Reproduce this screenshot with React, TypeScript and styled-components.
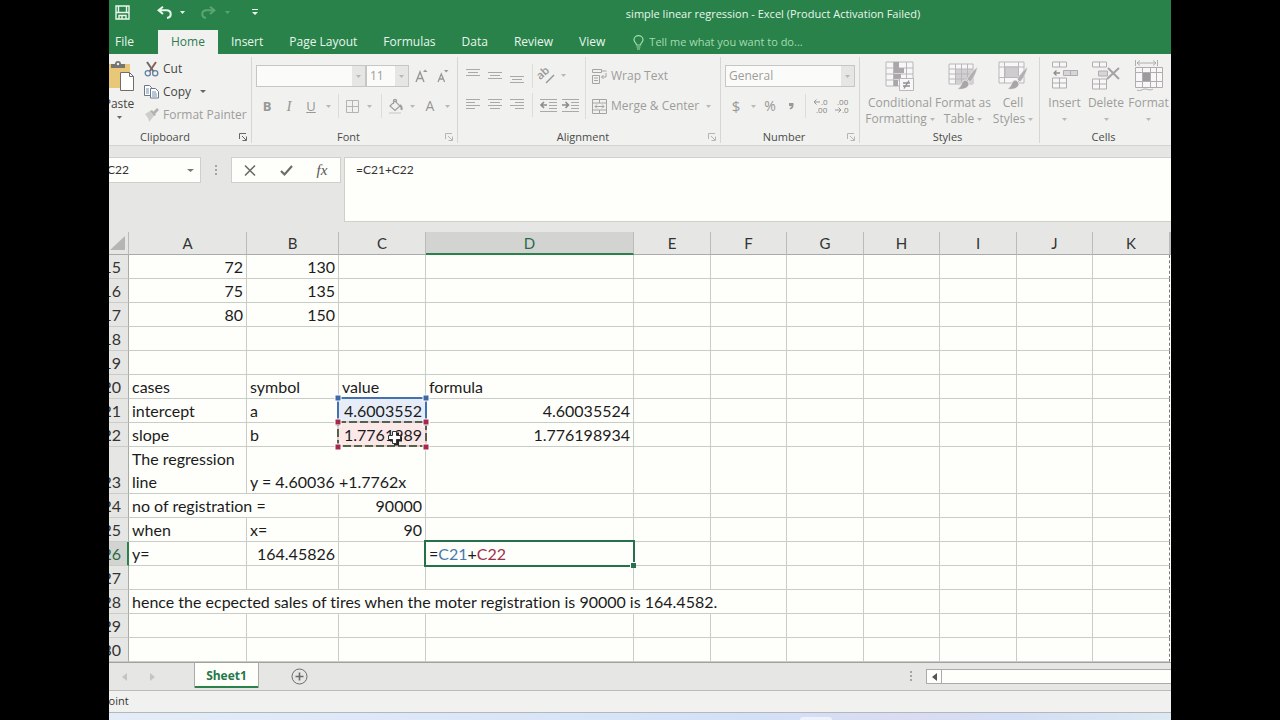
import React from 'react';
import styled, { createGlobalStyle, css } from 'styled-components';

const Global = createGlobalStyle`
  * { box-sizing: border-box; }
  html, body { margin: 0; background: #000; }
  button, input, textarea, select { font: inherit; color: inherit; margin: 0; padding: 0; border: 0; background: none; border-radius: 0; }
  textarea { resize: none; outline: none; }
`;

const UI = `'Open Sans', 'Noto Sans', sans-serif`;
const CELL = `Lato, 'Open Sans', sans-serif`;
const GREEN = '#28824a';
const PAPER = '#fefffb';
const LINE = '#c9cdc8';

const Stage = styled.div`
  min-height: 100vh;
  padding: 0 109px;
  background: #000;
  font-family: ${UI};
  font-size: 12px;
  line-height: 16px;
  color: #444;
`;
const Window = styled.div`
  min-height: 100vh;
  display: flex;
  flex-direction: column;
  overflow: hidden;
  background: #e6e7e4;
`;

/* ---------- title bar and tabs ---------- */
const TitleBar = styled.header`
  display: flex;
  height: 30px;
  background: ${GREEN};
  color: #e9f7ec;
`;
const QuickAccess = styled.div`
  display: flex;
  align-items: center;
  width: 266px;
  height: 24px;
  padding-left: 4px;
  flex: none;
`;
const QuickButton = styled.button<{ $w: number; $gap?: number }>`
  display: flex;
  justify-content: center;
  align-items: center;
  width: ${p => p.$w}px;
  height: 24px;
  margin-right: ${p => p.$gap || 0}px;
`;
const Title = styled.div`
  flex: 1;
  padding-top: 6px;
  text-align: center;
  white-space: nowrap;
  font-size: 11px;
`;
const Tabs = styled.nav`
  display: flex;
  height: 24px;
  background: ${GREEN};
  color: #e9f7ec;
  white-space: nowrap;
`;
const Tab = styled.button<{ $active?: boolean; $first?: boolean }>`
  padding: 0 13px;
  ${p => p.$first && css`width: 49px; padding: 0 0 0 6px; text-align: left;`}
  ${p => p.$active && css`background: #f1f2ef; color: #2f7a50;`}
`;
const TellMe = styled.label`
  display: flex;
  align-items: center;
  gap: 5px;
  margin-left: 15px;
  font-size: 11px;
  color: #a5dcb0;
  input { width: 200px; }
  input::placeholder { color: #a5dcb0; opacity: 1; }
`;

/* ---------- ribbon ---------- */
const Ribbon = styled.section`
  display: flex;
  height: 92px;
  background: #f1f2ef;
  border-bottom: 1px solid #d3d4d1;
`;
const Group = styled.div<{ $w: number; $last?: boolean; $shift?: number }>`
  display: flex;
  flex-direction: column;
  width: ${p => p.$w}px;
  flex: ${p => (p.$last ? '1 0 auto' : 'none')};
  margin: 3px 0 2px ${p => -(p.$shift || 0)}px;
  border-right: ${p => (p.$last ? 0 : 1)}px solid #d6d7d4;
  min-width: 0;
`;
const GroupBody = styled.div`
  display: flex;
  flex: 1;
  min-height: 0;
  padding-left: 4px;
`;
const GroupFooter = styled.div`
  display: flex;
  flex: none;
  height: 12px;
  padding-right: 4px;
  align-items: center;
  font-size: 11px;
  line-height: 12px;
  color: #4a4a4a;
  span { flex: 1; text-align: center; }
`;
const Stack = styled.div<{ $w?: number; $line?: boolean; $top?: number; $left?: number }>`
  display: flex;
  flex-direction: column;
  width: ${p => (p.$w ? p.$w + 'px' : 'auto')};
  height: ${p => (p.$line ? 62 : 70)}px;
  padding-top: ${p => p.$top ?? 4}px;
  padding-left: ${p => p.$left ?? 0}px;
  ${p => p.$line && css`border-right: 1px solid #dcdddb;`}
`;
const Row = styled.div`
  display: flex;
  align-items: center;
  height: 30px;
`;
const Tool = styled.button<{ $w?: number; $dim?: boolean }>`
  display: flex;
  flex: none;
  align-items: center;
  justify-content: ${p => (p.$w ? 'center' : 'flex-start')};
  gap: 4px;
  width: ${p => (p.$w ? p.$w + 'px' : 'auto')};
  height: 23px;
  white-space: nowrap;
  color: ${p => (p.$dim ? '#9d9c9b' : '#444')};
  svg { flex: none; overflow: visible; }
`;
const Glyph = styled(Tool)<{ $bold?: boolean; $italic?: boolean; $under?: boolean; $size?: number; $color?: string }>`
  font-size: ${p => p.$size ?? 13}px;
  font-weight: ${p => (p.$bold ? 700 : 400)};
  font-style: ${p => (p.$italic ? 'italic' : 'normal')};
  font-family: ${p => (p.$italic ? `'Liberation Serif', serif` : UI)};
  text-decoration: ${p => (p.$under ? 'underline' : 'none')};
  color: ${p => p.$color || '#989796'};
`;
const Rule = styled.i`
  width: 1px;
  height: 24px;
  margin: 0 4px;
  background: #dcdddb;
`;
const Combo = styled.label<{ $w: number }>`
  display: flex;
  width: ${p => p.$w}px;
  height: 22px;
  border: 1px solid #c6c7c4;
  background: #fbfcf9;
  color: #9d9c9b;
  input { flex: 1; min-width: 0; padding-left: 3px; }
  span { display: flex; align-items: center; justify-content: center; width: 13px; background: #e6e7e4; }
`;
const Big = styled.button<{ $w: number }>`
  display: flex;
  flex-direction: column;
  align-items: center;
  width: ${p => p.$w}px;
  padding-top: 3px;
  color: #9d9c9b;
  white-space: nowrap;
  svg.art { margin-bottom: 4px; flex: none; }
  span { display: flex; align-items: center; gap: 3px; height: 16px; }
`;
const Paste = styled.button`
  display: flex;
  flex-direction: column;
  align-items: center;
  width: 38px;
  margin-left: 5px;
  padding-top: 3px;
  svg.art { margin-bottom: 2px; flex: none; }
  span { height: 16px; margin-bottom: 4px; }
`;

/* ---------- formula bar ---------- */
const FormulaBar = styled.section`
  display: flex;
  align-items: flex-start;
  height: 86px;
  padding-top: 11px;
  font-family: ${CELL};
  color: #333;
`;
const Field = styled.div<{ $w: number; $open?: boolean }>`
  display: flex;
  align-items: center;
  justify-content: flex-end;
  width: ${p => p.$w}px;
  height: 26px;
  background: ${PAPER};
  border: 1px solid #cfd0cd;
  ${p => p.$open && css`border-left: 0;`}
  overflow: hidden;
  flex: none;
`;
const NameInput = styled.input`
  width: 73px;
  flex: none;
`;
const Handle = styled.div`
  width: 30px;
  height: 26px;
  display: flex;
  align-items: center;
  justify-content: center;
  flex: none;
`;
const Formula = styled.textarea`
  flex: 1;
  min-width: 0;
  height: 65px;
  margin-left: 3px;
  padding: 4px 11px;
  background: ${PAPER};
  border: 1px solid #cfd0cd;
  border-right: 0;
`;

/* ---------- sheet ---------- */
const Grid = styled.div`
  flex: 1;
  background: ${PAPER};
  overflow: hidden;
`;
const Table = styled.table`
  width: 100%;
  table-layout: fixed;
  border-collapse: separate;
  border-spacing: 0;
  font-family: ${CELL};
  font-size: 16px;
  font-variant-ligatures: none;
  color: #1b1b1b;
`;
const ColHead = styled.th<{ $on?: boolean }>`
  height: 23px;
  padding: 0;
  line-height: 20px;
  font-size: 15px;
  font-weight: 400;
  background: ${p => (p.$on ? '#d3d4d1' : '#e6e7e4')};
  border-right: 1px solid #b9bcb8;
  border-bottom: ${p => (p.$on ? `2px solid ${GREEN}` : '1px solid #a8aba7')};
  color: ${p => (p.$on ? '#2a6a49' : '#333')};
`;
const Corner = styled(ColHead)`
  svg { display: block; margin-left: 1px; }
`;
const RowHead = styled.th<{ $on?: boolean }>`
  padding: 0;
  font-weight: 400;
  vertical-align: bottom;
  background: ${p => (p.$on ? '#d3d4d1' : '#e6e7e4')};
  border-right: ${p => (p.$on ? `2px solid ${GREEN}` : '1px solid #a8aba7')};
  border-bottom: 1px solid ${LINE};
  color: ${p => (p.$on ? '#2a6a49' : '#333')};
  div { display: flex; justify-content: flex-end; line-height: 23px; padding-right: ${p => (p.$on ? 6 : 7)}px; overflow: hidden; }
`;
const Cell = styled.td<{ $right?: boolean; $dash?: boolean; $fill?: string; $wrap?: boolean }>`
  position: relative;
  height: ${p => (p.$wrap ? 47 : 24)}px;
  padding: 0 3px;
  line-height: 23px;
  vertical-align: bottom;
  text-align: ${p => (p.$right ? 'right' : 'left')};
  white-space: ${p => (p.$wrap ? 'normal' : 'nowrap')};
  background: ${p => p.$fill || 'transparent'};
  border-right: 1px ${p => (p.$dash ? 'dashed #777' : `solid ${LINE}`)};
  border-bottom: 1px solid ${LINE};
`;
const Overlay = styled.svg`
  position: absolute;
  left: -4px;
  top: -4px;
  width: calc(100% + 8px);
  height: calc(100% + 8px);
  overflow: visible;
  z-index: 2;
`;
const ActiveFrame = styled.span`
  position: absolute;
  inset: -2px;
  border: 2px solid #24714a;
  z-index: 2;
  &::after {
    content: '';
    position: absolute;
    right: -3px;
    bottom: -3px;
    width: 5px;
    height: 5px;
    background: #24714a;
    border-top: 1px solid #fff;
    border-left: 1px solid #fff;
  }
`;
const Pointer = styled.svg`
  position: absolute;
  left: 48px;
  top: 7px;
  z-index: 3;
`;
const Ref = styled.span<{ $c: string }>`
  color: ${p => p.$c};
`;

/* ---------- bottom bars ---------- */
const SheetBar = styled.footer`
  display: flex;
  height: 29px;
  border-top: 1px solid #9fa29e;
  border-bottom: 1px solid #b9bcb8;
  background: #e6e7e4;
`;
const NavButtons = styled.div`
  display: flex;
  align-items: center;
  width: 85px;
  padding-left: 1px;
`;
const SheetTab = styled.button`
  width: 65px;
  height: 25px;
  background: ${PAPER};
  border: solid #a8aba7;
  border-width: 0 1px;
  box-shadow: inset 0 -2px 0 ${GREEN};
  color: #25774a;
  font-weight: 700;
`;
const AddSheet = styled.button`
  display: flex;
  align-items: center;
  margin-left: 32px;
`;
const Spacer = styled.div`
  flex: 1;
`;
const HScroll = styled.div`
  display: flex;
  width: 245px;
  height: 15px;
  margin-top: 6px;
  border: 1px solid #a8aba7;
  border-right: 0;
  background: ${PAPER};
  button { display: flex; align-items: center; justify-content: center; width: 15px; border-right: 1px solid #a8aba7; }
`;
const Status = styled.div`
  height: 22px;
  padding-top: 2px;
  background: #f1f2ef;
  border-bottom: 1px solid #b4b8bd;
  font-size: 11px;
  color: #333;
  span { display: block; margin-left: -7px; }
`;
const Taskbar = styled.div`
  display: flex;
  justify-content: center;
  height: 7px;
  padding-left: 352px;
  background: linear-gradient(90deg, #e4ecf8 0%, #dbe6f8 35%, #d3e0f6 60%, #dadcf2 75%, #d3def4 85%, #dce8f2 100%);
  i { width: 32px; height: 3px; margin-top: 4px; border-radius: 3px 3px 0 0; background: #eef3fb; }
`;

const Caret = ({ c = '#b9b8b7', s = 5 }: { c?: string; s?: number }) => (
  <svg width={s} height="3" viewBox="0 0 6 3" preserveAspectRatio="none"><path d="M0 0h6L3 3z" fill={c} /></svg>
);
const Drop = ({ w = 12, label }: { w?: number; label: string }) => (
  <Tool $w={w} $dim aria-label={label}><Caret /></Tool>
);
const Launcher = ({ dark, label }: { dark?: boolean; label: string }) => (
  <button aria-label={label}>
    <svg width="8" height="8" viewBox="0 0 8 8" fill="none" stroke={dark ? '#666' : '#b5b5b4'}>
      <path d="M.5 6V.5H7M3 3l4 4M7.5 3.5v4h-4" />
    </svg>
  </button>
);
const Lines = ({ rows }: { rows: [number, number, number][] }) => (
  <svg width="14" height="14" viewBox="0 0 14 14" stroke="#aaa9a8" fill="none">
    {rows.map(([x, y, w], i) => <path key={i} d={`M${x} ${y}h${w}`} />)}
  </svg>
);
const Indent = ({ flip }: { flip?: boolean }) => (
  <svg width="17" height="14" viewBox="0 0 17 14" stroke="#aaa9a8" fill="none">
    <path d="M0 1.500h17M9 4.500h8M9 7.500h8M9 10.500h8M0 13.500h17" />
    <path d={flip ? 'M0 7h6M3.500 4l3 3-3 3' : 'M1 7h6M4 4L1 7l3 3'} stroke="#8d8c8b" strokeWidth="1.600" />
  </svg>
);
const Brush = () => (
  <g>
    <path d="M29.500 7c-3 2-8 8-10.500 12l3 3c3-3 6.500-9 7.500-15z" fill="#b3b0b2" stroke="#f1f2ef" strokeWidth=".6" />
    <path d="M18 20c-3 0-4 2-5 5-1 2-2 3-4 4 5 1 10 0 12-4 0-2-1-4-3-5z" fill="#a9a6a8" stroke="#f1f2ef" strokeWidth=".8" />
  </g>
);

const colWidths = [20, 118, 92, 87, 208, 77, 76, 77, 76, 77, 76, 77];
const letters = 'ABCDEFGHIJK'.split('');

type C = { v?: React.ReactNode; right?: boolean; span?: number; fill?: string; wrap?: boolean; over?: React.ReactNode };
const handles = (c: string) => (
  <>
    {[['0', '0'], ['100%', '0'], ['0', '100%'], ['100%', '100%']].map(([x, y], i) => (
      <svg key={i} x={x} y={y} overflow="visible">
        <rect x={x === '0' ? 0 : -6} y={y === '0' ? 0 : -6} width="6" height="6" fill={c} stroke="#fff" strokeWidth="1" />
      </svg>
    ))}
  </>
);
const BlueRange = (
  <Overlay aria-hidden="true">
    <svg x="3" y="3" width="100%" height="100%" overflow="visible">
      <path d="M0 0h88M0 0v24M88 0v24" stroke="#4472ae" strokeWidth="2" fill="none" />
    </svg>
    {handles('#3f69a6')}
  </Overlay>
);
const RedRange = (
  <Overlay aria-hidden="true">
    <svg x="3" y="3" width="100%" height="100%" overflow="visible">
      <path d="M0 0h88v24H0z" stroke="#e6c9c6" strokeWidth="2" fill="none" />
      <path d="M0 0h88v24H0z" stroke="#55624a" strokeWidth="2" strokeDasharray="8 3" fill="none" />
    </svg>
    {handles('#a8284b')}
  </Overlay>
);
const CrossPointer = (
  <Pointer width="16" height="16" viewBox="0 0 16 16" aria-hidden="true">
    <path d="M7 2.500h5v4h3v5h-3v4H7v-4H3v-5h4z" fill="#222" />
    <path d="M5.500 1.500h4v4h4v4h-4v4h-4v-4h-4v-4h4z" fill="#fff" stroke="#333" />
  </Pointer>
);

const rows: { n: number; cells: Record<string, C> }[] = [
  { n: 15, cells: { A: { v: '72', right: true }, B: { v: '130', right: true } } },
  { n: 16, cells: { A: { v: '75', right: true }, B: { v: '135', right: true } } },
  { n: 17, cells: { A: { v: '80', right: true }, B: { v: '150', right: true } } },
  { n: 18, cells: {} },
  { n: 19, cells: {} },
  { n: 20, cells: { A: { v: 'cases' }, B: { v: 'symbol' }, C: { v: 'value' }, D: { v: 'formula' } } },
  { n: 21, cells: { A: { v: 'intercept' }, B: { v: 'a' }, C: { v: '4.6003552', right: true, fill: '#e6edf8', over: BlueRange }, D: { v: '4.60035524', right: true } } },
  { n: 22, cells: { A: { v: 'slope' }, B: { v: 'b' }, C: { v: '1.7761989', right: true, fill: '#fbe8e9', over: <>{RedRange}{CrossPointer}</> }, D: { v: '1.776198934', right: true } } },
  { n: 23, cells: { A: { v: 'The regression line', wrap: true }, B: { v: 'y = 4.60036 +1.7762x', span: 2 } } },
  { n: 24, cells: { A: { v: 'no of registration =', span: 2 }, C: { v: '90000', right: true } } },
  { n: 25, cells: { A: { v: 'when' }, B: { v: 'x=' }, C: { v: '90', right: true } } },
  { n: 26, cells: { A: { v: 'y=' }, B: { v: '164.45826', right: true }, D: { v: <>=<Ref $c="#4a78ad">C21</Ref>+<Ref $c="#9c2f4a">C22</Ref></>, over: <ActiveFrame /> } } },
  { n: 27, cells: {} },
  { n: 28, cells: { A: { v: 'hence the ecpected sales of tires when the moter registration is 90000 is 164.4582.', span: 6 } } },
  { n: 29, cells: {} },
  { n: 30, cells: {} },
];

function SheetRow({ n, cells }: { n: number; cells: Record<string, C> }) {
  const out: React.ReactNode[] = [];
  for (let i = 0; i < letters.length; ) {
    const c = cells[letters[i]] || {};
    const span = c.span || 1;
    out.push(
      <Cell key={i} colSpan={span} $right={c.right} $fill={c.fill} $wrap={c.wrap} $dash={i + span === letters.length}>
        {c.v}{c.over}
      </Cell>
    );
    i += span;
  }
  return (
    <tr>
      <RowHead scope="row" $on={n === 26}><div>{n}</div></RowHead>
      {out}
      <td />
    </tr>
  );
}

export default function App() {
  return (
    <>
      <Global />
      <Stage>
        <Window>
          <TitleBar>
            <QuickAccess>
              <QuickButton $w={18} $gap={25} aria-label="Save">
                <svg width="15" height="15" viewBox="0 0 15 15" fill="none" stroke="#e9f7ec" strokeWidth="1.400">
                  <path d="M1 1h13v13H1zM1 7.500h13M3.500 1v6.500M11.500 1v6.500M4 14v-3.500h7V14M7 11v3" />
                </svg>
              </QuickButton>
              <QuickButton $w={16} $gap={6} aria-label="Undo">
                <svg width="15" height="13" viewBox="0 0 15 13" fill="none" stroke="#e9f7ec" strokeWidth="2">
                  <path d="M6 .8L1.500 4.300 6 8M2 4.300h7.500c5.500 0 5.500 7 .5 7.700" />
                </svg>
              </QuickButton>
              <QuickButton $w={8} $gap={14} aria-label="Undo history"><Caret c="#e9f7ec" /></QuickButton>
              <QuickButton $w={16} $gap={7} aria-label="Redo">
                <svg width="15" height="13" viewBox="0 0 15 13" fill="none" stroke="#5ba575" strokeWidth="2">
                  <path d="M9 .8l4.500 3.500L9 8M13 4.300H5.500C0 4.300 0 11.300 5 12" />
                </svg>
              </QuickButton>
              <QuickButton $w={8} $gap={20} aria-label="Redo history"><Caret c="#5ba575" /></QuickButton>
              <QuickButton $w={8} aria-label="Customize Quick Access Toolbar">
                <svg width="6" height="7" viewBox="0 0 6 7" fill="#e9f7ec"><path d="M0 0h6v1H0zM0 3h6L3 6z" /></svg>
              </QuickButton>
            </QuickAccess>
            <Title>simple linear regression - Excel (Product Activation Failed)</Title>
          </TitleBar>
          <Tabs>
            <Tab $first>File</Tab>
            <Tab $active>Home</Tab>
            <Tab>Insert</Tab>
            <Tab>Page Layout</Tab>
            <Tab>Formulas</Tab>
            <Tab>Data</Tab>
            <Tab>Review</Tab>
            <Tab>View</Tab>
            <TellMe>
              <svg width="11" height="15" viewBox="0 0 11 15" fill="none" stroke="#a5dcb0" strokeWidth="1.200">
                <path d="M3.500 10c0-2-2.500-2.800-2.500-5.200a4.500 4.200 0 0 1 9 0C10 7.200 7.500 8 7.500 10zM3.500 12h4M4 14h3" />
              </svg>
              <input aria-label="Tell me what you want to do" placeholder="Tell me what you want to do..." />
            </TellMe>
          </Tabs>

          <Ribbon>
            <Group $w={161} $shift={18}>
              <GroupBody>
                <Paste>
                  <svg className="art" width="32" height="34" viewBox="0 0 32 34">
                    <path d="M0 4h27v24H0z" fill="#e9c778" />
                    <path d="M8 8V4h4a3 3 0 0 1 6 0h4v4z" fill="#767473" />
                    <circle cx="15" cy="4" r="1.200" fill="#f1f2ef" />
                    <path d="M17.500 12.500h9l4 4v14h-13z" fill="#fff" stroke="#6f6e6d" />
                    <path d="M26.500 12.500v4h4" fill="none" stroke="#6f6e6d" />
                  </svg>
                  <span>Paste</span>
                  <Caret c="#666" />
                </Paste>
                <Stack $top={0} $left={6}>
                  <Tool>
                    <svg width="15" height="16" viewBox="0 0 15 16" fill="none">
                      <path d="M3 1l6.500 9.500" stroke="#6a6a6a" strokeWidth="2" /><path d="M12 1L5.500 10.500" stroke="#8f5f5c" strokeWidth="2" />
                      <circle cx="3.800" cy="12.200" r="2.600" stroke="#5f83a5" strokeWidth="1.300" /><circle cx="11.200" cy="12.200" r="2.600" stroke="#5f83a5" strokeWidth="1.300" />
                    </svg>
                    Cut
                  </Tool>
                  <Tool>
                    <svg width="15" height="15" viewBox="0 0 15 15" fill="#fff" stroke="#6b7785">
                      <path d="M.5 1.500h5l2 2v8h-7z" /><path d="M2 5h3M2 7h3M2 9h3" stroke="#6d90b3" />
                      <path d="M6.500 4.500h5l3 3v6.500h-8z" /><path d="M8 8h4M8 10h5M8 12h5" stroke="#6d90b3" />
                    </svg>
                    Copy
                    <svg width="12" height="3" viewBox="0 0 12 3"><path d="M5 0h6l-3 3z" fill="#666" /></svg>
                  </Tool>
                  <Tool $dim>
                    <svg width="15" height="14" viewBox="0 0 15 14">
                      <path d="M1 6l5-3 4 5-5 6C5 11 3 8 1 6z" fill="#cfcdcc" /><path d="M6 3l2-1 4 5-2 1zM9 4l4-4 2 2-4 4z" fill="#b3b1b0" />
                    </svg>
                    Format Painter
                  </Tool>
                </Stack>
              </GroupBody>
              <GroupFooter><span>Clipboard</span><Launcher dark label="Clipboard settings" /></GroupFooter>
            </Group>

            <Group $w={206}>
              <GroupBody>
                <Stack>
                  <Row>
                    <Combo $w={110}><input aria-label="Font name" /><span><Caret /></span></Combo>
                    <Combo $w={43}><input aria-label="Font size" defaultValue="11" /><span><Caret /></span></Combo>
                    <Tool $w={24} $dim aria-label="Increase font size">
                      <svg width="13" height="14" viewBox="0 0 13 14" fill="none" stroke="#999897" strokeWidth="1.400"><path d="M1 13L5 3l4 10M2.500 9.500h5" /><path d="M8 3l2.200-2.500L12.500 3z" fill="#999897" stroke="none" /></svg>
                    </Tool>
                    <Tool $w={20} $dim aria-label="Decrease font size">
                      <svg width="12" height="14" viewBox="0 0 12 14" fill="none" stroke="#999897" strokeWidth="1.300"><path d="M1 13l3.300-8 3.300 8M2.200 10h4.200" /><path d="M7 1h4.500L9.200 3.500z" fill="#999897" stroke="none" /></svg>
                    </Tool>
                  </Row>
                  <Row>
                    <Glyph $w={22} $bold aria-label="Bold">B</Glyph>
                    <Glyph $w={22} $italic $size={15} aria-label="Italic">I</Glyph>
                    <Glyph $w={22} $under aria-label="Underline">U</Glyph>
                    <Drop label="Underline style" />
                    <Rule />
                    <Tool $w={18} $dim aria-label="Borders">
                      <svg width="13" height="13" viewBox="0 0 13 13" fill="none" stroke="#b5b3b5"><path d="M.5.5h12v12H.5zM6.500.5v12M.5 6.500h12" /></svg>
                    </Tool>
                    <Drop label="Border style" w={16} />
                    <Rule />
                    <Tool $w={18} $dim aria-label="Fill color">
                      <svg width="15" height="15" viewBox="0 0 15 15" fill="none" stroke="#a09f9e" strokeWidth="1.200"><path d="M2 7l5-5 5 5-5 4.500zM5.500 5V1.500c0-1.500 3-1.500 3 0V4" /><path d="M12 6c2 2 2 3 1.500 5" strokeWidth="2" /><path d="M1 14h12" stroke="#dddcdb" strokeWidth="2" /></svg>
                    </Tool>
                    <Drop label="Fill color choices" w={16} />
                    <Glyph $w={20} $size={14} aria-label="Font color">A</Glyph>
                    <Drop label="Font color choices" w={14} />
                  </Row>
                </Stack>
              </GroupBody>
              <GroupFooter><span>Font</span><Launcher label="Font settings" /></GroupFooter>
            </Group>

            <Group $w={263}>
              <GroupBody>
                <Stack $w={124} $line>
                  <Row>
                    <Tool $w={22} aria-label="Top align"><Lines rows={[[0, 0.5, 14], [2, 3.5, 10], [0, 6.5, 14]]} /></Tool>
                    <Tool $w={22} aria-label="Middle align"><Lines rows={[[0, 3.5, 14], [2, 6.5, 10], [0, 9.5, 14]]} /></Tool>
                    <Tool $w={22} aria-label="Bottom align"><Lines rows={[[0, 7.5, 14], [2, 10.5, 10], [0, 13.5, 14]]} /></Tool>
                    <Rule />
                    <Tool $w={20} aria-label="Orientation">
                      <svg width="17" height="16" viewBox="0 0 17 16"><text x="0" y="9" fontSize="11" fontWeight="600" fontFamily="Open Sans" fill="#989796" transform="rotate(-42 5 9)">ab</text><path d="M7 15l8-8" stroke="#989796" strokeWidth="1.500" fill="none" /></svg>
                    </Tool>
                    <Drop label="Orientation choices" />
                  </Row>
                  <Row>
                    <Tool $w={22} aria-label="Align left"><Lines rows={[[0, 1.5, 14], [0, 4.5, 9], [0, 7.5, 14], [0, 10.5, 9]]} /></Tool>
                    <Tool $w={22} aria-label="Center"><Lines rows={[[0, 1.5, 14], [2, 4.5, 10], [0, 7.5, 14], [2, 10.5, 10]]} /></Tool>
                    <Tool $w={22} aria-label="Align right"><Lines rows={[[0, 1.5, 14], [5, 4.5, 9], [0, 7.5, 14], [5, 10.5, 9]]} /></Tool>
                    <Rule />
                    <Tool $w={22} aria-label="Decrease indent"><Indent /></Tool>
                    <Tool $w={22} aria-label="Increase indent"><Indent flip /></Tool>
                  </Row>
                </Stack>
                <Stack $left={6}>
                  <Row>
                    <Tool $dim>
                      <svg width="15" height="15" viewBox="0 0 15 15" fill="none" stroke="#a5a4a3"><path d="M.5.5h9v3h-9zM9.500 2h5M.5 6.500h7v8h-7zM2 9h4M2 11.500h4M14 4v4H9.500M11.500 6l-2 2 2 2" /></svg>
                      Wrap Text
                    </Tool>
                  </Row>
                  <Row>
                    <Tool $dim>
                      <svg width="15" height="15" viewBox="0 0 15 15" fill="none" stroke="#a5a4a3"><path d="M.5.5h14v14H.5zM.5 4h14M.5 11h14M7.500.5V4M7.500 11v3.500M3 7.500h9M5 5.500l-2 2 2 2M10 5.500l2 2-2 2" /></svg>
                      Merge &amp; Center
                    </Tool>
                    <Drop label="Merge choices" w={18} />
                  </Row>
                </Stack>
              </GroupBody>
              <GroupFooter><span>Alignment</span><Launcher label="Alignment settings" /></GroupFooter>
            </Group>

            <Group $w={139}>
              <GroupBody>
                <Stack>
                  <Row>
                    <Combo $w={130}><input aria-label="Number format" defaultValue="General" /><span><Caret /></span></Combo>
                  </Row>
                  <Row>
                    <Glyph $w={22} $size={15} aria-label="Accounting format">$</Glyph>
                    <Drop label="Currency choices" />
                    <Glyph $w={22} $size={14} aria-label="Percent style">%</Glyph>
                    <Tool $w={20} aria-label="Comma style"><svg width="5" height="8" viewBox="0 0 5 8"><path d="M0 1h4.500v2.500C4.500 6 3 7 .8 7.500V6C2 5.500 2.500 5 2.500 4H0z" fill="#999897" /></svg></Tool>
                    <Rule />
                    <Tool $w={22} aria-label="Increase decimal">
                      <svg width="16" height="16" viewBox="0 0 16 16" fill="#858483" fontSize="8" fontFamily="Open Sans"><text x="8" y="7">.0</text><text x="3" y="15">.00</text><path d="M1 4h6M3.500 1.500L1 4l2.500 2.500" stroke="#989796" fill="none" /></svg>
                    </Tool>
                    <Tool $w={20} aria-label="Decrease decimal">
                      <svg width="16" height="16" viewBox="0 0 16 16" fill="#858483" fontSize="8" fontFamily="Open Sans"><text x="3" y="7">.00</text><text x="8" y="15">.0</text><path d="M1 12h6M4.500 9.500L7 12l-2.500 2.500" stroke="#989796" fill="none" /></svg>
                    </Tool>
                  </Row>
                </Stack>
              </GroupBody>
              <GroupFooter><span>Number</span><Launcher label="Number settings" /></GroupFooter>
            </Group>

            <Group $w={180}>
              <GroupBody>
                <Big $w={72}>
                  <svg className="art" width="30" height="31" viewBox="0 0 30 31" fill="none" stroke="#bab6ba">
                    <path d="M1 2h27v24H1z" fill="#f8f7f7" /><path d="M8.500 2v24M21.500 2v24M1 8h27M1 14h27M1 20h27" />
                    <path d="M9 2h5v6H9zM9 8h10v5H9zM9 14h7v5H9zM9 20h4v6H9z" fill="#aaa6aa" stroke="none" />
                    <path d="M14.500 18.500h14v12h-14z" fill="#f8f7f7" /><path d="M18 23h7M18 26h7M24 20.500l-5 8" stroke="#908e90" strokeWidth="1.300" />
                  </svg>
                  <span>Conditional</span><span>Formatting <Caret /></span>
                </Big>
                <Big $w={54}>
                  <svg className="art" width="30" height="31" viewBox="0 0 30 31" fill="none" stroke="#bab6ba">
                    <path d="M1 4h24v20H1z" fill="#f8f7f7" /><path d="M8 9h17v15H8z" fill="#d3d0d3" stroke="none" /><path d="M7.500 4v20M13.500 4v20M19.500 4v20M1 9h24M1 14h24M1 19h24" />
                    <Brush />
                  </svg>
                  <span>Format as</span><span>Table <Caret /></span>
                </Big>
                <Big $w={46}>
                  <svg className="art" width="30" height="31" viewBox="0 0 30 31" fill="none" stroke="#bab6ba">
                    <path d="M1 2h25v21H1z" fill="#f8f7f7" /><path d="M6.500 2v21M20.500 2v21M1 7h25M1 17.500h25" /><path d="M7 7h13.500v10.500H7z" fill="#cfcccf" />
                    <Brush />
                  </svg>
                  <span>Cell</span><span>Styles <Caret /></span>
                </Big>
              </GroupBody>
              <GroupFooter><span>Styles</span></GroupFooter>
            </Group>

            <Group $w={131} $last>
              <GroupBody>
                <Big $w={41}>
                  <svg className="art" width="28" height="31" viewBox="0 0 28 31" fill="#f8f7f7" stroke="#b0acb0">
                    <path d="M1.500 2h14v5h-14zM8.500 2v5M1.500 18h14v10h-14zM8.500 18v10M1.500 23h14" />
                    <path d="M12.500 10.500h14v5h-14zM19.500 10.500v5" fill="#d8d5d8" /><path d="M3 13h6M5.500 10.500L3 13l2.500 2.500" fill="none" stroke="#8f8d8f" strokeWidth="1.300" />
                  </svg>
                  <span>Insert</span><span><Caret /></span>
                </Big>
                <Big $w={42}>
                  <svg className="art" width="28" height="31" viewBox="0 0 28 31" fill="#f8f7f7" stroke="#b0acb0">
                    <path d="M.5 2h14v5H.5zM7.500 2v5M.5 19h14v10H.5zM7.500 19v10M.5 24h14" />
                    <path d="M6.500 11h9v5h-9z" fill="#d8d5d8" /><path d="M16 8l11 11M27 8L15 19" fill="none" stroke="#a5a2a5" strokeWidth="2" />
                  </svg>
                  <span>Delete</span><span><Caret /></span>
                </Big>
                <Big $w={43}>
                  <svg className="art" width="30" height="31" viewBox="0 0 30 31" fill="none" stroke="#b0acb0">
                    <path d="M1.500 0v6M23.500 0v6M3 3h19M6 .5L3 3l3 2.500M19 .5L22 3l-3 2.500" />
                    <path d="M1.500 7.500h27v20h-27z" fill="#f8f7f7" /><path d="M8.500 7.500v20M16.500 7.500v20M22.500 7.500v20M1.500 12.500h27M1.500 21.500h27" /><path d="M9 13h7v8H9z" fill="#9d9a9d" stroke="none" /><path d="M3 30c3 2 5-1 8-1s5 2 8 0" />
                  </svg>
                  <span>Format</span><span><Caret /></span>
                </Big>
              </GroupBody>
              <GroupFooter><span>Cells</span></GroupFooter>
            </Group>
          </Ribbon>

          <FormulaBar>
            <Field $w={92} $open>
              <NameInput aria-label="Name box" defaultValue="C22" />
              <Tool $w={20} aria-label="Name list"><Caret c="#777" s={7} /></Tool>
            </Field>
            <Handle><svg width="2" height="11" viewBox="0 0 2 11" fill="#a5a5a4"><path d="M0 0h2v2H0zM0 4h2v2H0zM0 8h2v2H0z" /></svg></Handle>
            <Field $w={110}>
              <Tool $w={36} aria-label="Cancel"><svg width="12" height="11" viewBox="0 0 12 11"><path d="M1 .5l10 10M11 .5l-10 10" stroke="#6b6b6a" strokeWidth="1.600" /></svg></Tool>
              <Tool $w={36} aria-label="Enter"><svg width="13" height="11" viewBox="0 0 13 11"><path d="M1 6l3.500 3.500L12 1" stroke="#6b6b6a" strokeWidth="2.200" fill="none" /></svg></Tool>
              <Glyph $w={36} $italic $size={15} $color="#555" aria-label="Insert function">fx</Glyph>
            </Field>
            <Formula aria-label="Formula" defaultValue="=C21+C22" />
          </FormulaBar>

          <Grid>
            <Table>
              <colgroup>{colWidths.map((w, i) => <col key={i} width={w} />)}<col /></colgroup>
              <thead>
                <tr>
                  <Corner><svg width="16" height="16" viewBox="0 0 16 16"><path d="M15 1v14H0z" fill="#b5b6b4" /></svg></Corner>
                  {letters.map(l => <ColHead key={l} scope="col" $on={l === 'D'}>{l}</ColHead>)}
                  <ColHead />
                </tr>
              </thead>
              <tbody>{rows.map(r => <SheetRow key={r.n} {...r} />)}</tbody>
            </Table>
          </Grid>

          <SheetBar>
            <NavButtons>
              <Tool $w={28} aria-label="Previous sheet"><svg width="5" height="8" viewBox="0 0 5 8"><path d="M5 0v8L0 4z" fill="#c4c5c3" /></svg></Tool>
              <Tool $w={28} aria-label="Next sheet"><svg width="5" height="8" viewBox="0 0 5 8"><path d="M0 0v8l5-4z" fill="#c4c5c3" /></svg></Tool>
            </NavButtons>
            <SheetTab>Sheet1</SheetTab>
            <AddSheet aria-label="New sheet">
              <svg width="17" height="17" viewBox="0 0 17 17" fill="none" stroke="#6b6b6a"><circle cx="8.500" cy="8.500" r="7.500" /><path d="M4.500 8.500h8M8.500 4.500v8" strokeWidth="1.600" /></svg>
            </AddSheet>
            <Spacer />
            <Handle><svg width="2" height="11" viewBox="0 0 2 11" fill="#a5a5a4"><path d="M0 0h2v2H0zM0 4h2v2H0zM0 8h2v2H0z" /></svg></Handle>
            <HScroll><button aria-label="Scroll left"><svg width="5" height="8" viewBox="0 0 5 8"><path d="M5 0v8L0 4z" fill="#555" /></svg></button></HScroll>
          </SheetBar>
          <Status><span>Point</span></Status>
          <Taskbar><i /></Taskbar>
        </Window>
      </Stage>
    </>
  );
}
